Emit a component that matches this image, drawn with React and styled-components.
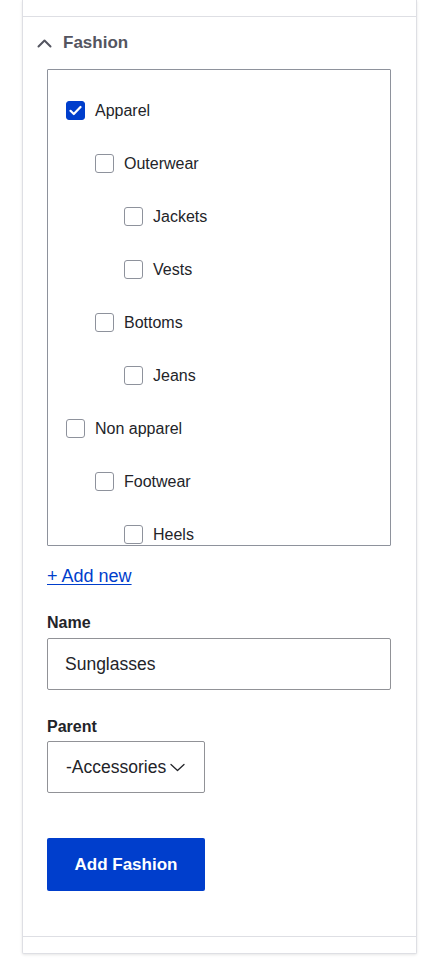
import styled, { createGlobalStyle } from "styled-components";

const GlobalStyle = createGlobalStyle`
  body {
    margin: 0;
    background: #ffffff;
    font-family: "Liberation Sans", Arial, sans-serif;
    color: #232429;
  }
`;

const Page = styled.div`
  padding: 0 24px 6px 22px;
`;

const Card = styled.div`
  width: 395px;
  box-sizing: border-box;
  border: 1px solid #dedfe4;
  border-top: none;
  border-radius: 0 0 2px 2px;
  background: #fff;
  box-shadow: 0 1px 3px rgba(0, 0, 0, 0.1);
`;

const TopStrip = styled.div`
  height: 16px;
  border-bottom: 1px solid #dedfe4;
`;

const Details = styled.section`
  padding: 0 0 45px 24px;
  border-bottom: 1px solid #dedfe4;
`;

const Summary = styled.div`
  display: flex;
  align-items: center;
  gap: 11px;
  height: 52px;
  margin-left: -10px;
  font-size: 17px;
  font-weight: 700;
  color: #545560;
`;

const Tree = styled.div`
  width: 344px;
  height: 477px;
  box-sizing: border-box;
  border: 1px solid #8e929c;
  border-radius: 1px;
  overflow: hidden;
  padding: 14px 0 0 18px;
`;

const Item = styled.label`
  display: flex;
  align-items: center;
  gap: 10px;
  height: 53px;
  padding-left: ${(p) => p.level * 29}px;
  font-size: 16px;
`;

const Box = styled.span`
  width: 19px;
  height: 19px;
  box-sizing: border-box;
  flex: none;
  display: flex;
  align-items: center;
  justify-content: center;
  border-radius: 3px;
  border: 1px solid ${(p) => (p.checked ? "#003ecc" : "#8e929c")};
  background: ${(p) => (p.checked ? "#003ecc" : "#fff")};
`;

const AddLink = styled.a`
  display: block;
  width: max-content;
  margin-top: 18px;
  font-size: 18px;
  line-height: 24px;
  color: #003ecc;
  text-decoration: underline;
  text-underline-offset: 2px;
  text-decoration-thickness: 1px;
`;

const Label = styled.div`
  margin-top: ${(p) => p.top}px;
  font-size: 16px;
  line-height: 20px;
  font-weight: 700;
`;

const Input = styled.div`
  margin-top: 5px;
  width: 344px;
  height: 52px;
  box-sizing: border-box;
  border: 1px solid #919297;
  border-radius: 2px;
  display: flex;
  align-items: center;
  padding: 0 17px;
  font-size: 17.5px;
`;

const Select = styled.div`
  margin-top: 4px;
  width: 158px;
  height: 52px;
  box-sizing: border-box;
  border: 1px solid #919297;
  border-radius: 2px;
  display: flex;
  align-items: center;
  gap: 4px;
  padding: 0 0 0 18px;
  font-size: 17.5px;
`;

const Button = styled.button`
  margin-top: 45px;
  width: 158px;
  height: 53px;
  border: none;
  border-radius: 2px;
  background: #003ecc;
  color: #fff;
  font-family: inherit;
  font-size: 17px;
  font-weight: 700;
`;

const BottomStrip = styled.div`
  height: 16px;
`;

const items = [
  ["Apparel", 0, true],
  ["Outerwear", 1],
  ["Jackets", 2],
  ["Vests", 2],
  ["Bottoms", 1],
  ["Jeans", 2],
  ["Non apparel", 0],
  ["Footwear", 1],
  ["Heels", 2],
];

function Check() {
  return (
    <svg width="13" height="11" viewBox="0 0 13 11">
      <path d="M1.5 5.8 L4.8 9 L11.5 2" fill="none" stroke="#fff" strokeWidth="2.2" strokeLinecap="round" strokeLinejoin="round" />
    </svg>
  );
}

export default function App() {
  return (
    <Page>
      <GlobalStyle />
      <Card>
        <TopStrip />
        <Details>
          <Summary>
            <svg width="15" height="9" viewBox="0 0 15 9">
              <path d="M1.5 7.5 L7.5 1.5 L13.5 7.5" fill="none" stroke="#545560" strokeWidth="2" strokeLinecap="round" strokeLinejoin="round" />
            </svg>
            Fashion
          </Summary>
          <Tree>
            {items.map(([name, level, checked]) => (
              <Item key={name} level={level}>
                <Box checked={checked}>{checked && <Check />}</Box>
                {name}
              </Item>
            ))}
          </Tree>
          <AddLink href="#">+ Add new</AddLink>
          <Label top={25}>Name</Label>
          <Input>Sunglasses</Input>
          <Label top={27}>Parent</Label>
          <Select>
            -Accessories
            <svg width="15" height="9" viewBox="0 0 15 9">
              <path d="M1 1.5 L7.5 7.5 L14 1.5" fill="none" stroke="#232429" strokeWidth="1.3" strokeLinecap="round" strokeLinejoin="round" />
            </svg>
          </Select>
          <Button>Add Fashion</Button>
        </Details>
        <BottomStrip />
      </Card>
    </Page>
  );
}
